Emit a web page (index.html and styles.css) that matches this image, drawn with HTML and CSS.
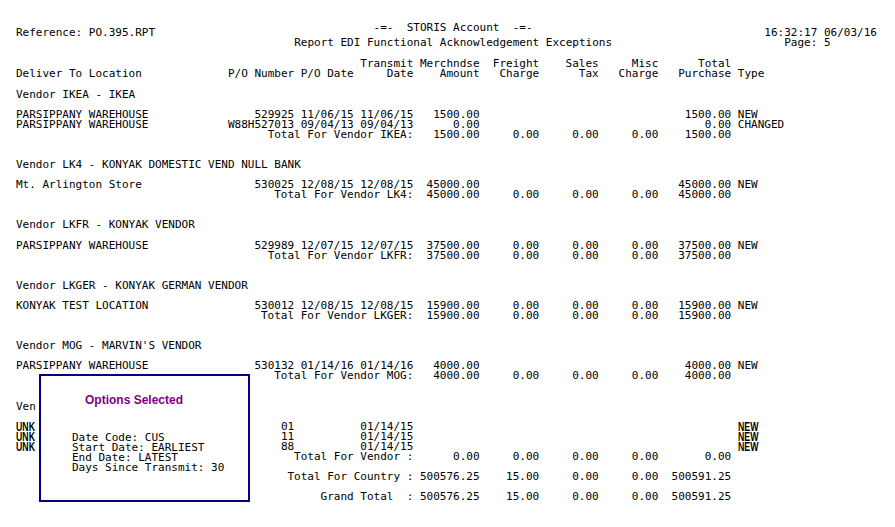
FILE: index.html
```html
<!DOCTYPE html>
<html>
<head>
<meta charset="utf-8">
<title>PO.395.RPT</title>
<link rel="stylesheet" href="styles.css">
</head>
<body>
<div class="page">
  <header class="head">
    <div class="ref ln">Reference: PO.395.RPT</div>
    <div class="title">
      <div class="t1 ln">-=-  STORIS Account  -=-</div>
      <div class="ln">Report EDI Functional Acknowledgement Exceptions</div>
    </div>
    <div></div>
    <div class="stamp">
      <div class="ln">16:32:17 06/03/16</div>
      <div class="pg ln">Page: 5</div>
    </div>
  </header>

  <section class="report">
    <div class="row"><span class="c4">Transmit</span><span>Merchndse</span><span>Freight</span><span>Sales</span><span>Misc</span><span>Total</span></div>
    <div class="row"><span class="loc">Deliver To Location</span><span>P/O Number</span><span>P/O Date</span><span>Date</span><span>Amount</span><span>Charge</span><span>Tax</span><span>Charge</span><span>Purchase</span><span class="type">Type</span></div>
    <div class="sp"></div>
    <div class="row"><span class="full">Vendor IKEA - IKEA</span></div>
    <div class="sp"></div>
    <div class="row"><span class="loc">PARSIPPANY WAREHOUSE</span><span>529925</span><span>11/06/15</span><span>11/06/15</span><span>1500.00</span><span class="c9">1500.00</span><span class="type">NEW</span></div>
    <div class="row"><span class="loc">PARSIPPANY WAREHOUSE</span><span>W88H527013</span><span>09/04/13</span><span>09/04/13</span><span>0.00</span><span class="c9">0.00</span><span class="type">CHANGED</span></div>
    <div class="row"><span class="tot">Total For Vendor IKEA:</span><span>1500.00</span><span>0.00</span><span>0.00</span><span>0.00</span><span>1500.00</span></div>
    <div class="sp"></div>
    <div class="sp"></div>
    <div class="row"><span class="full">Vendor LK4 - KONYAK DOMESTIC VEND NULL BANK</span></div>
    <div class="sp"></div>
    <div class="row"><span class="loc">Mt. Arlington Store</span><span>530025</span><span>12/08/15</span><span>12/08/15</span><span>45000.00</span><span class="c9">45000.00</span><span class="type">NEW</span></div>
    <div class="row"><span class="tot">Total For Vendor LK4:</span><span>45000.00</span><span>0.00</span><span>0.00</span><span>0.00</span><span>45000.00</span></div>
    <div class="sp"></div>
    <div class="sp"></div>
    <div class="row"><span class="full">Vendor LKFR - KONYAK VENDOR</span></div>
    <div class="sp"></div>
    <div class="row"><span class="loc">PARSIPPANY WAREHOUSE</span><span>529989</span><span>12/07/15</span><span>12/07/15</span><span>37500.00</span><span>0.00</span><span>0.00</span><span>0.00</span><span>37500.00</span><span class="type">NEW</span></div>
    <div class="row"><span class="tot">Total For Vendor LKFR:</span><span>37500.00</span><span>0.00</span><span>0.00</span><span>0.00</span><span>37500.00</span></div>
    <div class="sp"></div>
    <div class="sp"></div>
    <div class="row"><span class="full">Vendor LKGER - KONYAK GERMAN VENDOR</span></div>
    <div class="sp"></div>
    <div class="row"><span class="loc">KONYAK TEST LOCATION</span><span>530012</span><span>12/08/15</span><span>12/08/15</span><span>15900.00</span><span>0.00</span><span>0.00</span><span>0.00</span><span>15900.00</span><span class="type">NEW</span></div>
    <div class="row"><span class="tot">Total For Vendor LKGER:</span><span>15900.00</span><span>0.00</span><span>0.00</span><span>0.00</span><span>15900.00</span></div>
    <div class="sp"></div>
    <div class="sp"></div>
    <div class="row"><span class="full">Vendor MOG - MARVIN'S VENDOR</span></div>
    <div class="sp"></div>
    <div class="row"><span class="loc">PARSIPPANY WAREHOUSE</span><span>530132</span><span>01/14/16</span><span>01/14/16</span><span>4000.00</span><span class="c9">4000.00</span><span class="type">NEW</span></div>
    <div class="row"><span class="tot">Total For Vendor MOG:</span><span>4000.00</span><span>0.00</span><span>0.00</span><span>0.00</span><span>4000.00</span></div>
    <div class="sp"></div>
    <div class="sp"></div>
    <div class="row"><span class="full">Ven</span></div>
    <div class="sp"></div>
    <div class="row"><span class="loc"><span class="cnd">UNK</span></span><span>01</span><span></span><span>01/14/15</span><span class="type c10"><span class="cnd">NEW</span></span></div>
    <div class="row"><span class="loc"><span class="cnd">UNK</span></span><span>11</span><span></span><span>01/14/15</span><span class="type c10"><span class="cnd">NEW</span></span></div>
    <div class="row"><span class="loc"><span class="cnd">UNK</span></span><span>88</span><span></span><span>01/14/15</span><span class="type c10"><span class="cnd">NEW</span></span></div>
    <div class="row"><span class="tot">Total For Vendor :</span><span>0.00</span><span>0.00</span><span>0.00</span><span>0.00</span><span>0.00</span></div>
    <div class="sp"></div>
    <div class="row"><span class="tot">Total For Country :</span><span>500576.25</span><span>15.00</span><span>0.00</span><span>0.00</span><span>500591.25</span></div>
    <div class="sp"></div>
    <div class="row"><span class="tot">Grand Total  :</span><span>500576.25</span><span>15.00</span><span>0.00</span><span>0.00</span><span>500591.25</span></div>
  </section>

  <aside class="options">
    <div class="opt-title">Options Selected</div>
    <div class="opt-lines">
      <div class="ln">Date Code: CUS</div>
      <div class="ln">Start Date: EARLIEST</div>
      <div class="ln">End Date: LATEST</div>
      <div class="ln">Days Since Transmit: 30</div>
    </div>
  </aside>
</div>
</body>
</html>
```

FILE: styles.css
```css
html, body {
  margin: 0;
  padding: 0;
  background: #ffffff;
}

body {
  color: #000000;
  font-family: "DejaVu Sans Mono", "Liberation Mono", monospace;
  font-size: 11px;
  width: 895px;
  height: 527px;
  overflow: hidden;
}

.page {
  position: relative;
  padding-left: 16px;
  height: 527px;
}

.ln {
  white-space: pre;
}

.head {
  display: grid;
  grid-template-columns: 42ch 48ch 23ch auto;
  align-items: start;
  padding-top: 22.7px;
  line-height: 10px;
}

.ref {
  margin-top: 5.8px;
}

.title {
  text-align: center;
}

.title .t1 {
  height: 15.8px;
}

.stamp {
  margin-top: 5.8px;
}

.stamp .pg {
  padding-left: 3ch;
}

.report {
  margin-top: 10.9px;
  line-height: 10.075px;
}

.row {
  display: grid;
  grid-template-columns: 32ch 10ch 9ch 9ch 10ch 9ch 9ch 9ch 11ch auto;
  height: 10.075px;
}

.row > span {
  text-align: right;
  white-space: pre;
}

.row > .loc,
.row > .full,
.row > .type {
  text-align: left;
}

.row > .type {
  padding-left: 1ch;
}

.row > .full {
  grid-column: 1 / -1;
}

.row > .tot {
  grid-column: 1 / 5;
}

.row > .c4 {
  grid-column: 4;
}

.row > .c9 {
  grid-column: 9;
}

.row > .c10 {
  grid-column: 10;
}

.sp {
  height: 10.075px;
}

.cnd {
  display: inline-block;
  font-family: "Liberation Sans", Arial, sans-serif;
  font-weight: bold;
  font-size: 12.5px;
  line-height: 10px;
  height: 10px;
  vertical-align: top;
  transform: scaleX(0.7);
  transform-origin: 0 0;
}

.options {
  position: absolute;
  left: 39px;
  top: 374px;
  width: 211px;
  height: 128px;
  box-sizing: border-box;
  border: 2px solid #000080;
  background: #ffffff;
}

.opt-title {
  font-family: "Liberation Sans", Arial, sans-serif;
  font-weight: bold;
  font-size: 12px;
  line-height: 14px;
  color: #800080;
  padding: 17px 0 0 44px;
}

.opt-lines {
  padding: 25.6px 0 0 31px;
  line-height: 10.1px;
}
```
